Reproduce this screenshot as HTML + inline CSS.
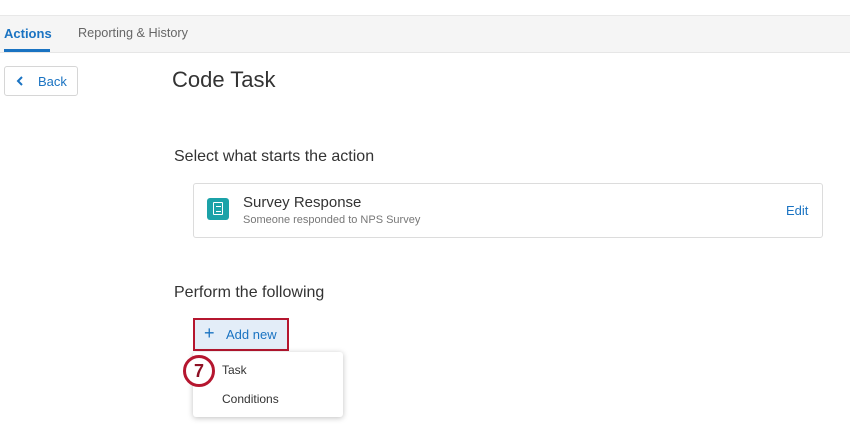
<!DOCTYPE html>
<html><head><style>
*{margin:0;padding:0;box-sizing:border-box}
body{width:850px;height:425px;overflow:hidden;background:#fff;font-family:"Liberation Sans",Arial,sans-serif;position:relative}
.a{position:absolute}
</style></head><body>
<div class="a" style="left:0;top:15px;width:850px;height:38px;background:#f5f5f5;border-top:1px solid #e8e8e8;border-bottom:1px solid #e6e6e6"></div>
<div class="a" style="left:4px;top:26px;font-size:13px;font-weight:bold;color:#1a73c2">Actions</div>
<div class="a" style="left:4px;top:49px;width:46px;height:3px;background:#1a73c2"></div>
<div class="a" style="left:78px;top:26px;font-size:12.7px;color:#666">Reporting &amp; History</div>
<div class="a" style="left:4px;top:66px;width:74px;height:30px;border:1px solid #d6d6d6;border-radius:3px"></div>
<svg class="a" style="left:16px;top:76px" width="8" height="10"><path d="M6 1 L2 5 L6 9" stroke="#1a73c2" stroke-width="2" fill="none"/></svg>
<div class="a" style="left:38px;top:74px;font-size:13px;color:#1a73c2">Back</div>
<div class="a" style="left:172px;top:67px;font-size:22px;color:#333">Code Task</div>
<div class="a" style="left:174px;top:148px;font-size:16px;color:#333">Select what starts the action</div>
<div class="a" style="left:193px;top:183px;width:630px;height:55px;border:1px solid #dcdcdc;border-radius:3px"></div>
<div class="a" style="left:207px;top:198px;width:22px;height:22px;background:#1ba2a8;border-radius:3px"></div>
<div class="a" style="left:213px;top:202px;width:10px;height:13px;border:1.5px solid #fff;border-radius:1px"></div>
<div class="a" style="left:216px;top:206px;width:5px;height:6px;border-top:1px solid #fff;border-bottom:1px solid #fff"></div>
<div class="a" style="left:243px;top:194px;font-size:15px;color:#333">Survey Response</div>
<div class="a" style="left:243px;top:214px;font-size:11px;color:#777">Someone responded to NPS Survey</div>
<div class="a" style="left:786px;top:203px;font-size:13px;color:#1a73c2">Edit</div>
<div class="a" style="left:174px;top:284px;font-size:16px;color:#333">Perform the following</div>
<div class="a" style="left:193px;top:318px;width:96px;height:33px;border:2px solid #b5162f;background:#e3edf8"></div>
<div class="a" style="left:204px;top:323px;font-size:18px;color:#1a73c2">+</div>
<div class="a" style="left:226px;top:327px;font-size:13px;color:#1a73c2">Add new</div>
<div class="a" style="left:193px;top:352px;width:150px;height:65px;background:#fff;border-radius:3px;box-shadow:0 1px 6px rgba(0,0,0,.25)"></div>
<div class="a" style="left:183px;top:355px;width:32px;height:32px;border:3px solid #b5162f;border-radius:50%;background:#fff;font-size:18px;font-weight:bold;color:#8e1024;text-align:center;line-height:26px">7</div>
<div class="a" style="left:222px;top:363px;font-size:12px;color:#333">Task</div>
<div class="a" style="left:222px;top:392px;font-size:12px;color:#333">Conditions</div>
</body></html>
